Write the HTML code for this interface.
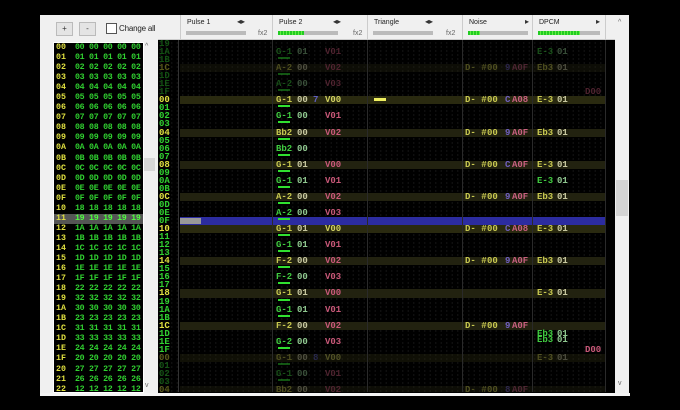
<!DOCTYPE html><html><head><style>
*{margin:0;padding:0;box-sizing:border-box}
body{width:680px;height:410px;background:#000;position:relative;overflow:hidden;font-family:"Liberation Sans",sans-serif}
.a{position:absolute}
.mono{font-family:"Liberation Mono",monospace;font-weight:bold;font-size:9px}
.mono span{white-space:pre}
#left{left:40px;top:15px;width:118px;height:379px;background:#f0f0f0}
.btn{top:7px;width:17px;height:14px;border:1px solid #bbb;background:#e4e4e4;font-size:8px;text-align:center;line-height:12px;color:#333}
#list{left:13px;top:27px;width:91px;height:351px;background:#000;border:1px solid #fff;overflow:hidden;font-size:8.3px}
.lr{height:10.06px;line-height:10px;position:relative}
.lr .k{position:absolute;left:2px;color:#e0e040}
.lr .v{position:absolute;left:21px;color:#30d030;letter-spacing:-0.3px}
#pat{left:158px;top:15px;width:471px;height:379px;background:#000;border-right:1px solid #fff}
#hdr{left:158px;top:15px;width:457px;height:25px;background:#f0f0f0;border-bottom:1px solid #ccc}
.ch{top:0;height:25px;border-left:1px solid #ccc;font-size:7px;color:#222}
.ch .nm{position:absolute;left:6px;top:4px}
.ch .ar{position:absolute;top:2px;font-size:8px;color:#333}
.ch .bar{position:absolute;left:5px;top:16px;height:4px;background:#bbb}
.ch .g{position:absolute;left:5px;top:16px;height:4px;background:repeating-linear-gradient(90deg,#22cc22 0 2px,#66ee44 2px 3px)}
.ch .fx{position:absolute;top:15px;font-size:7px;color:#666}
#rows{left:158px;top:40px;width:447px;height:352px;overflow:hidden;background-image:radial-gradient(circle,#1a1a1a 0.6px,transparent 0.8px);background-size:5.5px 4px;background-position:22px 1px}
.r{height:8.06px;line-height:8px;position:relative}
.r span{position:absolute}
.h{background:linear-gradient(90deg,transparent 22px,#222210 22px)}
.hh{background:linear-gradient(90deg,transparent 22px,#2a2a10 22px)}
.d{opacity:.38}
.rn{left:1px;color:#30d030}
.h .rn,.hh .rn{color:#e0e040}
.nt{left:118px;color:#40cc40}
.in{left:139px;color:#90c890}
.vo{left:155px;color:#6060c0}
.ef{left:167px;color:#c85878}
.nn{left:307px;color:#c8c850}
.ni{left:329px;color:#c8c850}
.nv{left:347px;color:#7060c0}
.ne{left:354px;color:#c86080}
.dn{left:379px;color:#40cc40}
.di{left:399px;color:#90c890}
.h .nt,.hh .nt,.h .dn,.hh .dn{color:#c8c850}
.h .in,.hh .in,.h .di,.hh .di{color:#c8c8a0}
.hh .ef{color:#d0d060}
.gb{left:120px;top:1px;width:12px;height:2px;background:#30e030}
.vl{top:40px;width:1px;height:352px;background:#2a2a2a}
</style></head><body>
<div id="left" class="a">
<div class="a btn" style="left:16px">+</div>
<div class="a btn" style="left:39px">-</div>
<div class="a" style="left:66px;top:8px;width:11px;height:11px;border:1px solid #555;background:#fff"></div>
<div class="a" style="left:79px;top:9px;font-size:8px;color:#222;white-space:nowrap;letter-spacing:-0.2px">Change all</div>
<div id="list" class="a mono">
<div class="lr"><span class="k">00</span><span class="v">00 00 00 00 00</span></div>
<div class="lr"><span class="k">01</span><span class="v">01 01 01 01 01</span></div>
<div class="lr"><span class="k">02</span><span class="v">02 02 02 02 02</span></div>
<div class="lr"><span class="k">03</span><span class="v">03 03 03 03 03</span></div>
<div class="lr"><span class="k">04</span><span class="v">04 04 04 04 04</span></div>
<div class="lr"><span class="k">05</span><span class="v">05 05 05 05 05</span></div>
<div class="lr"><span class="k">06</span><span class="v">06 06 06 06 06</span></div>
<div class="lr"><span class="k">07</span><span class="v">07 07 07 07 07</span></div>
<div class="lr"><span class="k">08</span><span class="v">08 08 08 08 08</span></div>
<div class="lr"><span class="k">09</span><span class="v">09 09 09 09 09</span></div>
<div class="lr"><span class="k">0A</span><span class="v">0A 0A 0A 0A 0A</span></div>
<div class="lr"><span class="k">0B</span><span class="v">0B 0B 0B 0B 0B</span></div>
<div class="lr"><span class="k">0C</span><span class="v">0C 0C 0C 0C 0C</span></div>
<div class="lr"><span class="k">0D</span><span class="v">0D 0D 0D 0D 0D</span></div>
<div class="lr"><span class="k">0E</span><span class="v">0E 0E 0E 0E 0E</span></div>
<div class="lr"><span class="k">0F</span><span class="v">0F 0F 0F 0F 0F</span></div>
<div class="lr"><span class="k">10</span><span class="v">18 18 18 18 18</span></div>
<div class="lr" style="background:#555"><span class="k">11</span><span class="v" style="color:#50ff40">19 19 19 19 19</span></div>
<div class="lr"><span class="k">12</span><span class="v">1A 1A 1A 1A 1A</span></div>
<div class="lr"><span class="k">13</span><span class="v">1B 1B 1B 1B 1B</span></div>
<div class="lr"><span class="k">14</span><span class="v">1C 1C 1C 1C 1C</span></div>
<div class="lr"><span class="k">15</span><span class="v">1D 1D 1D 1D 1D</span></div>
<div class="lr"><span class="k">16</span><span class="v">1E 1E 1E 1E 1E</span></div>
<div class="lr"><span class="k">17</span><span class="v">1F 1F 1F 1F 1F</span></div>
<div class="lr"><span class="k">18</span><span class="v">22 22 22 22 22</span></div>
<div class="lr"><span class="k">19</span><span class="v">32 32 32 32 32</span></div>
<div class="lr"><span class="k">1A</span><span class="v">30 30 30 30 30</span></div>
<div class="lr"><span class="k">1B</span><span class="v">23 23 23 23 23</span></div>
<div class="lr"><span class="k">1C</span><span class="v">31 31 31 31 31</span></div>
<div class="lr"><span class="k">1D</span><span class="v">33 33 33 33 33</span></div>
<div class="lr"><span class="k">1E</span><span class="v">24 24 24 24 24</span></div>
<div class="lr"><span class="k">1F</span><span class="v">20 20 20 20 20</span></div>
<div class="lr"><span class="k">20</span><span class="v">27 27 27 27 27</span></div>
<div class="lr"><span class="k">21</span><span class="v">26 26 26 26 26</span></div>
<div class="lr"><span class="k">22</span><span class="v">12 12 12 12 12</span></div>
</div>
<div class="a" style="left:105px;top:28px;font-size:7px;color:#666">^</div>
<div class="a" style="left:104px;top:143px;width:11px;height:13px;background:#d6d6d6"></div>
<div class="a" style="left:105px;top:367px;font-size:7px;color:#666">v</div>
</div>
<div id="pat" class="a"></div>
<div id="hdr" class="a">
<div class="a ch" style="left:22px;width:92px"><span class="nm">Pulse 1</span><span class="ar" style="left:56px">◂▸</span><div class="bar" style="width:60px"></div><span class="fx" style="left:77px">fx2</span></div>
<div class="a ch" style="left:114px;width:95px"><span class="nm">Pulse 2</span><span class="ar" style="left:60px">◂▸</span><div class="bar" style="width:60px"></div><div class="g" style="width:26px"></div><span class="fx" style="left:80px">fx2</span></div>
<div class="a ch" style="left:209px;width:95px"><span class="nm">Triangle</span><span class="ar" style="left:57px">◂▸</span><div class="bar" style="width:60px"></div><span class="fx" style="left:78px">fx2</span></div>
<div class="a ch" style="left:304px;width:70px"><span class="nm">Noise</span><span class="ar" style="left:62px">▸</span><div class="bar" style="width:60px"></div><div class="g" style="width:12px"></div></div>
<div class="a ch" style="left:374px;width:73px"><span class="nm">DPCM</span><span class="ar" style="left:63px">▸</span><div class="bar" style="width:62px"></div><div class="g" style="width:42px"></div></div>
<div class="a ch" style="left:447px;width:10px"></div>
</div>
<div class="a" style="left:615px;top:15px;width:14px;height:379px;background:#f0f0f0"></div>
<div class="a" style="left:618px;top:19px;font-size:7px;color:#666">^</div>
<div class="a" style="left:616px;top:180px;width:12px;height:36px;background:#d4d4d4"></div>
<div class="a" style="left:618px;top:380px;font-size:7px;color:#666">v</div>
<div class="a" style="left:40px;top:393px;width:590px;height:3px;background:#f4f4f4"></div>
<div id="rows" class="a mono">
<div class="r d"><span class="rn">19</span></div>
<div class="r d"><span class="rn">1A</span><span class="nt">G-1</span><span class="in">01</span><span class="ef">V01</span><span class="dn">E-3</span><span class="di">01</span></div>
<div class="r d"><span class="rn">1B</span><span class="gb"></span></div>
<div class="r d h"><span class="rn">1C</span><span class="nt">A-2</span><span class="in">00</span><span class="ef">V02</span><span class="nn">D- #</span><span class="ni">00</span><span class="nv">9</span><span class="ne">A0F</span><span class="dn">Eb3</span><span class="di">01</span></div>
<div class="r d"><span class="rn">1D</span><span class="gb"></span></div>
<div class="r d"><span class="rn">1E</span><span class="nt">A-2</span><span class="in">00</span><span class="ef">V03</span></div>
<div class="r d"><span class="rn">1F</span><span class="gb"></span><span style="left:427px;color:#c85878">D00</span></div>
<div class="r hh"><span class="rn">00</span><span class="nt">G-1</span><span class="in">00</span><span class="vo">7</span><span class="ef">V00</span><span style="left:216px;top:2px;width:12px;height:3px;background:#f0f060"></span><span class="nn">D- #</span><span class="ni">00</span><span class="nv">C</span><span class="ne">A08</span><span class="dn">E-3</span><span class="di">01</span></div>
<div class="r"><span class="rn">01</span><span class="gb"></span></div>
<div class="r"><span class="rn">02</span><span class="nt">G-1</span><span class="in">00</span><span class="ef">V01</span></div>
<div class="r"><span class="rn">03</span><span class="gb"></span></div>
<div class="r h"><span class="rn">04</span><span class="nt">Bb2</span><span class="in">00</span><span class="ef">V02</span><span class="nn">D- #</span><span class="ni">00</span><span class="nv">9</span><span class="ne">A0F</span><span class="dn">Eb3</span><span class="di">01</span></div>
<div class="r"><span class="rn">05</span><span class="gb"></span></div>
<div class="r"><span class="rn">06</span><span class="nt">Bb2</span><span class="in">00</span></div>
<div class="r"><span class="rn">07</span><span class="gb"></span></div>
<div class="r h"><span class="rn">08</span><span class="nt">G-1</span><span class="in">01</span><span class="ef">V00</span><span class="nn">D- #</span><span class="ni">00</span><span class="nv">C</span><span class="ne">A0F</span><span class="dn">E-3</span><span class="di">01</span></div>
<div class="r"><span class="rn">09</span><span class="gb"></span></div>
<div class="r"><span class="rn">0A</span><span class="nt">G-1</span><span class="in">01</span><span class="ef">V01</span><span class="dn">E-3</span><span class="di">01</span></div>
<div class="r"><span class="rn">0B</span><span class="gb"></span></div>
<div class="r h"><span class="rn">0C</span><span class="nt">A-2</span><span class="in">00</span><span class="ef">V02</span><span class="nn">D- #</span><span class="ni">00</span><span class="nv">9</span><span class="ne">A0F</span><span class="dn">Eb3</span><span class="di">01</span></div>
<div class="r"><span class="rn">0D</span><span class="gb"></span></div>
<div class="r"><span class="rn">0E</span><span class="nt">A-2</span><span class="in">00</span><span class="ef">V03</span></div>
<div class="r" style="background:linear-gradient(90deg,transparent 22px,#2c2ca0 22px)"><span class="rn">0F</span><span style="left:22px;top:1px;width:21px;height:6px;background:#999"></span><span class="gb"></span></div>
<div class="r hh"><span class="rn">10</span><span class="nt">G-1</span><span class="in">01</span><span class="ef">V00</span><span class="nn">D- #</span><span class="ni">00</span><span class="nv">C</span><span class="ne">A08</span><span class="dn">E-3</span><span class="di">01</span></div>
<div class="r"><span class="rn">11</span><span class="gb"></span></div>
<div class="r"><span class="rn">12</span><span class="nt">G-1</span><span class="in">01</span><span class="ef">V01</span></div>
<div class="r"><span class="rn">13</span><span class="gb"></span></div>
<div class="r h"><span class="rn">14</span><span class="nt">F-2</span><span class="in">00</span><span class="ef">V02</span><span class="nn">D- #</span><span class="ni">00</span><span class="nv">9</span><span class="ne">A0F</span><span class="dn">Eb3</span><span class="di">01</span></div>
<div class="r"><span class="rn">15</span><span class="gb"></span></div>
<div class="r"><span class="rn">16</span><span class="nt">F-2</span><span class="in">00</span><span class="ef">V03</span></div>
<div class="r"><span class="rn">17</span><span class="gb"></span></div>
<div class="r h"><span class="rn">18</span><span class="nt">G-1</span><span class="in">01</span><span class="ef">V00</span><span class="dn">E-3</span><span class="di">01</span></div>
<div class="r"><span class="rn">19</span><span class="gb"></span></div>
<div class="r"><span class="rn">1A</span><span class="nt">G-1</span><span class="in">01</span><span class="ef">V01</span></div>
<div class="r"><span class="rn">1B</span><span class="gb"></span></div>
<div class="r h"><span class="rn">1C</span><span class="nt">F-2</span><span class="in">00</span><span class="ef">V02</span><span class="nn">D- #</span><span class="ni">00</span><span class="nv">9</span><span class="ne">A0F</span></div>
<div class="r"><span class="rn">1D</span><span class="dn" style="color:#40cc40">Eb3</span><span class="di">01</span></div>
<div class="r"><span class="rn">1E</span><span class="nt">G-2</span><span class="in">00</span><span class="ef">V03</span><span class="dn" style="top:-2px">Eb3</span><span class="di" style="top:-2px">01</span></div>
<div class="r"><span class="rn">1F</span><span class="gb"></span><span style="left:427px;color:#c85878">D00</span></div>
<div class="r hh d"><span class="rn">00</span><span class="nt">G-1</span><span class="in">00</span><span class="vo">8</span><span class="ef">V00</span><span class="dn">E-3</span><span class="di">01</span></div>
<div class="r d"><span class="rn">01</span><span class="gb"></span></div>
<div class="r d"><span class="rn">02</span><span class="nt">G-1</span><span class="in">00</span><span class="ef">V01</span></div>
<div class="r d"><span class="rn">03</span><span class="gb"></span></div>
<div class="r d h"><span class="rn">04</span><span class="nt">Bb2</span><span class="in">00</span><span class="ef">V02</span><span class="nn">D- #</span><span class="ni">00</span><span class="nv">8</span><span class="ne">A0F</span></div>
</div>
<div class="a vl" style="left:178px;background:#333"></div>
<div class="a vl" style="left:272px"></div>
<div class="a vl" style="left:367px"></div>
<div class="a vl" style="left:462px"></div>
<div class="a vl" style="left:532px"></div>
<div class="a vl" style="left:605px"></div>
</body></html>
